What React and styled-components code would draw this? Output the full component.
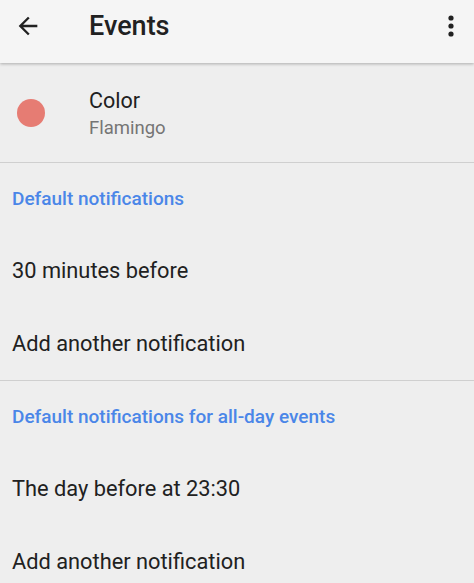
import React from 'react';
import styled, { createGlobalStyle } from 'styled-components';

const GlobalStyle = createGlobalStyle`
	html, body {
		margin: 0;
		padding: 0;
		background: #eeeeee;
		font-family: Roboto, 'Noto Sans', Arial, sans-serif;
	}
`;

const Screen = styled.div`
	width: 474px;
	height: 583px;
	overflow: hidden;
	background: #eeeeee;
	display: flex;
	flex-direction: column;

	& > * {
		flex-shrink: 0;
	}
`;

const AppBar = styled.header`
	height: 63px;
	display: flex;
	align-items: center;
	background: #f5f5f5;
	box-shadow: 0 1px 3px rgba(0, 0, 0, 0.28);
	position: relative;
	z-index: 1;
	padding-bottom: 12px;
	box-sizing: border-box;
`;

const IconButton = styled.div`
	width: ${props => props.width || 56}px;
	display: flex;
	justify-content: center;
	align-items: center;
	color: #212121;
`;

const Title = styled.h1`
	flex: 1;
	margin: 0 0 0 33px;
	font-size: 27px;
	font-weight: 500;
	color: #212121;
`;

const ColorRow = styled.div`
	height: 99px;
	display: flex;
	align-items: center;
	border-bottom: 1px solid #cfcfcf;
`;

const Swatch = styled.div`
	width: 28px;
	height: 28px;
	border-radius: 50%;
	background: ${props => props.color};
	margin: 0 44px 0 17px;
`;

const ColorText = styled.div`
	padding-top: 3px;
`;

const Primary = styled.div`
	font-size: 21.5px;
	line-height: 26px;
	color: #212121;
`;

const Secondary = styled.div`
	font-size: 18.5px;
	line-height: 24px;
	color: #757575;
	margin-top: 2px;
`;

const Section = styled.section`
	border-bottom: ${props => (props.divided ? '1px solid #cfcfcf' : 'none')};
`;

const SectionTitle = styled.div`
	height: 71px;
	display: flex;
	align-items: center;
	padding-left: 12px;
	font-size: 19px;
	font-weight: 500;
	color: #4a86e8;
`;

const Item = styled.div`
	height: 73px;
	display: flex;
	align-items: center;
	padding-left: 12px;
	font-size: 21.8px;
	color: #212121;
`;

const BackArrow = () => (
	<svg width="28" height="28" viewBox="0 0 24 24">
		<path d="M20 11H7.83l5.59-5.59L12 4l-8 8 8 8 1.41-1.41L7.83 13H20v-2z" fill="#212121" />
	</svg>
);

const MoreIcon = () => (
	<svg width="8" height="26" viewBox="0 0 8 26">
		<circle cx="4" cy="5" r="2.6" fill="#212121" />
		<circle cx="4" cy="13" r="2.6" fill="#212121" />
		<circle cx="4" cy="21" r="2.6" fill="#212121" />
	</svg>
);

const sections = [
	{
		title: 'Default notifications',
		items: ['30 minutes before', 'Add another notification'],
		divided: true
	},
	{
		title: 'Default notifications for all-day events',
		items: ['The day before at 23:30', 'Add another notification']
	}
];

const App = () => (
	<Screen>
		<GlobalStyle />
		<AppBar>
			<IconButton width={56}>
				<BackArrow />
			</IconButton>
			<Title>Events</Title>
			<IconButton width={46}>
				<MoreIcon />
			</IconButton>
		</AppBar>
		<ColorRow>
			<Swatch color="#e67c73" />
			<ColorText>
				<Primary>Color</Primary>
				<Secondary>Flamingo</Secondary>
			</ColorText>
		</ColorRow>
		{sections.map(section => (
			<Section key={section.title} divided={section.divided}>
				<SectionTitle>{section.title}</SectionTitle>
				{section.items.map((item, i) => (
					<Item key={i}>{item}</Item>
				))}
			</Section>
		))}
	</Screen>
);

export default App;
